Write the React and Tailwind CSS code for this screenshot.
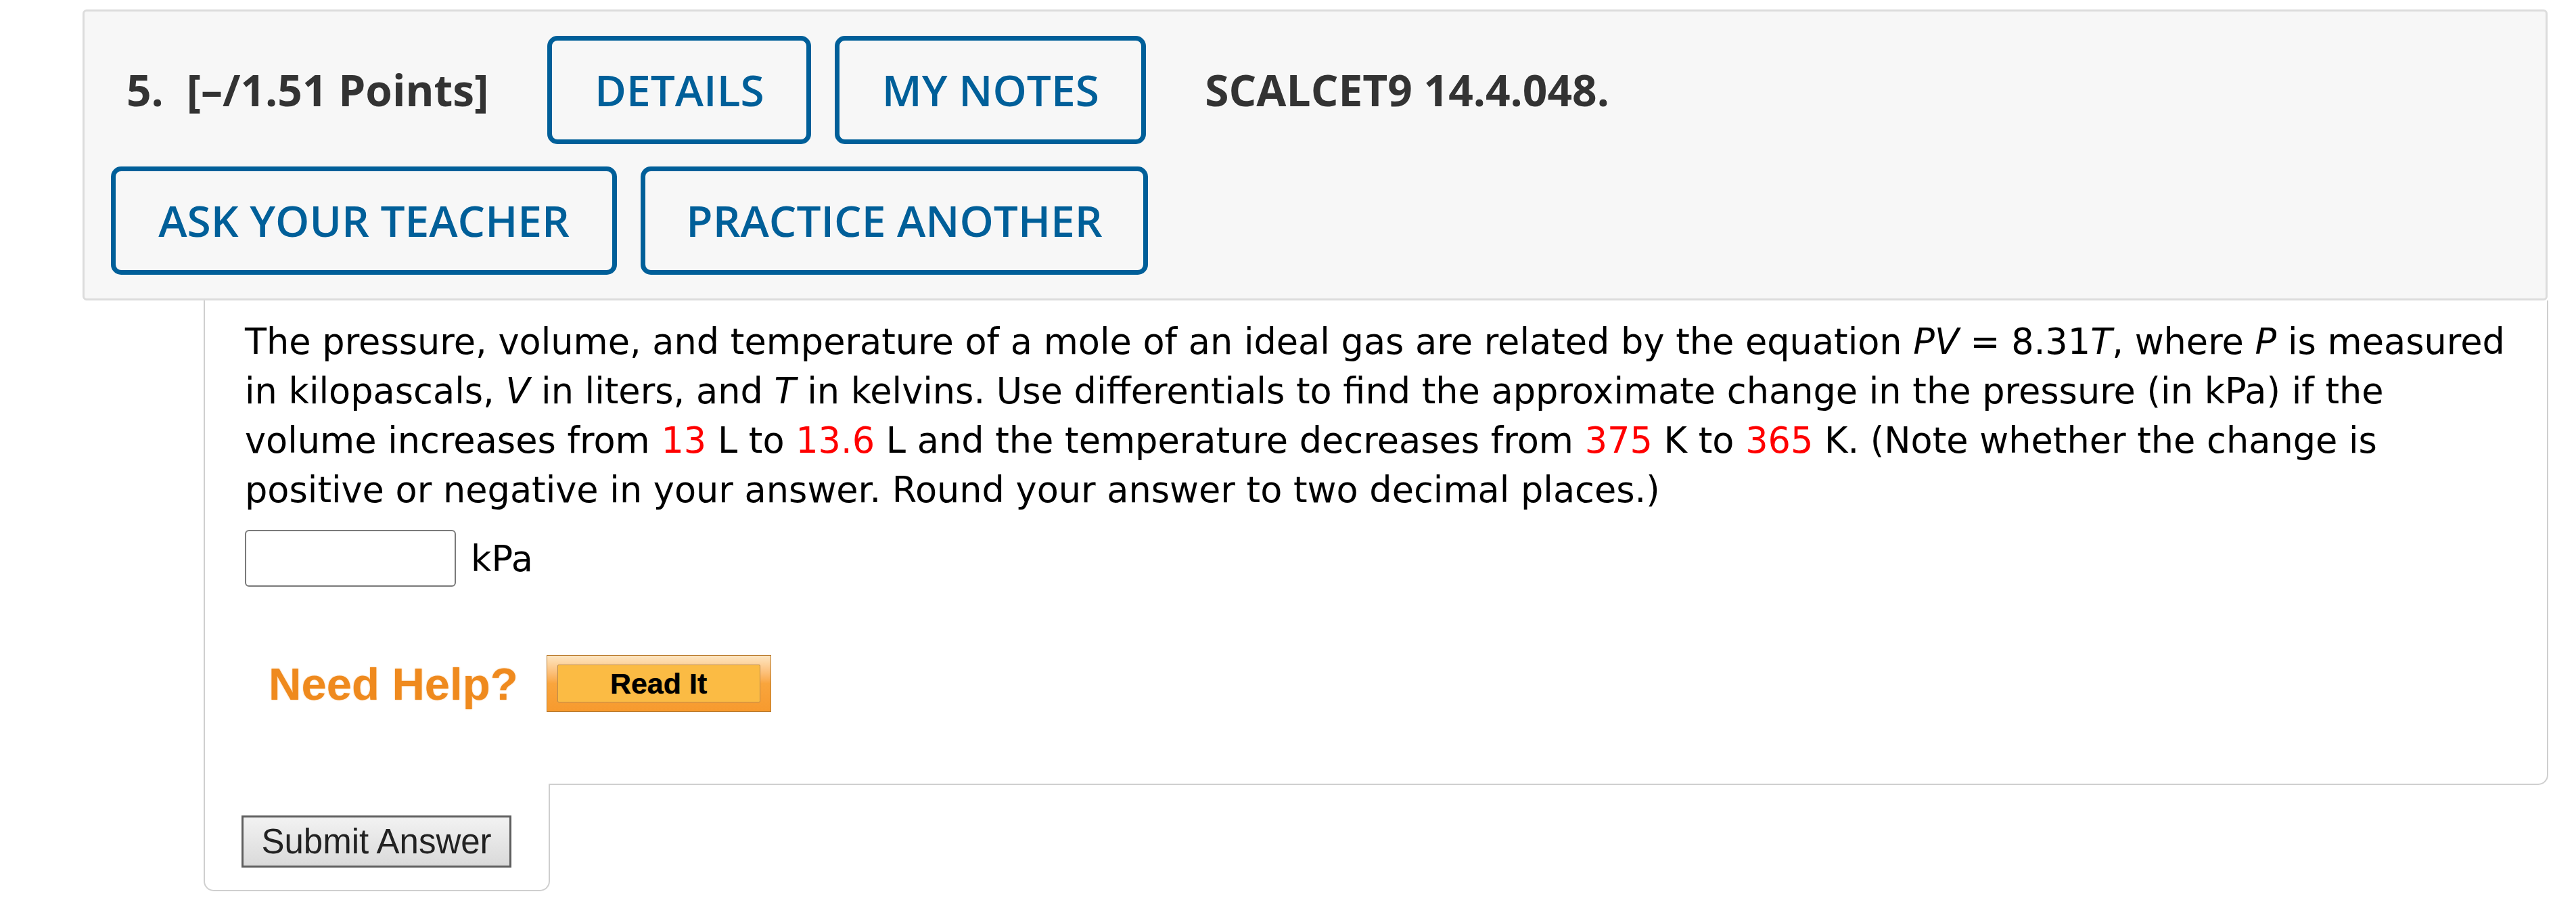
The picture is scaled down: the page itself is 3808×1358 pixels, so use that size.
import React from 'react'

const openSans = { fontFamily: '"Open Sans", "Liberation Sans", sans-serif' }

const OutlineButton = ({ label, width }) => (
  <button
    className={`${width} h-[160px] shrink-0 rounded-[15px] border-[7px] border-[#005f99] bg-[#f7f7f7] text-[64px] font-semibold leading-none text-[#005f99]`}
  >
    {label}
  </button>
)

const Red = ({ children }) => <span className="text-[#ff0000]">{children}</span>

const App = () => {
  return (
    <div className="h-[1358px] w-[3808px] overflow-hidden bg-white pt-[14px]">
      {/* question header */}
      <div
        style={openSans}
        className="ml-[122px] w-[3644px] rounded-[6px] border-[3px] border-[#dcdcdc] bg-[#f7f7f7] pb-[35px] pl-[39px] pt-[36px]"
      >
        <div className="flex items-center">
          <p className="ml-[23px] text-[64px] font-bold leading-none text-[#333]">
            5.<span className="ml-[34px]">[–/1.51 Points]</span>
          </p>
          <div className="ml-[87px] flex gap-[35px]">
            <OutlineButton label="DETAILS" width="w-[390px]" />
            <OutlineButton label="MY NOTES" width="w-[460px]" />
          </div>
          <p className="ml-[87px] text-[64px] font-bold leading-none text-[#333]">SCALCET9 14.4.048.</p>
        </div>
        <div className="mt-[33px] flex gap-[35px]">
          <OutlineButton label="ASK YOUR TEACHER" width="w-[748px]" />
          <OutlineButton label="PRACTICE ANOTHER" width="w-[750px]" />
        </div>
      </div>

      {/* question body */}
      <div className="ml-[301px] w-[3466px] rounded-br-[15px] border-x-2 border-b-2 border-[#cfcfcf] bg-white pb-[106px] pl-[59px] pt-[24px]">
        <p className="whitespace-nowrap font-['DejaVu_Sans',Verdana,sans-serif] text-[52.5px] leading-[73px] text-black">
          The pressure, volume, and temperature of a mole of an ideal gas are related by the equation <i>PV</i> = 8.31<i>T</i>, where <i>P</i> is measured
          <br />
          in kilopascals, <i>V</i> in liters, and <i>T</i> in kelvins. Use differentials to find the approximate change in the pressure (in kPa) if the
          <br />
          volume increases from <Red>13</Red> L to <Red>13.6</Red> L and the temperature decreases from <Red>375</Red> K to <Red>365</Red> K. (Note whether the change is
          <br />
          positive or negative in your answer. Round your answer to two decimal places.)
        </p>

        <div className="mt-[23px] flex items-center">
          <input type="text" className="h-[84px] w-[312px] rounded-[6px] border-2 border-[#7a7a7a] bg-white" />
          <span className="ml-[22px] font-['DejaVu_Sans',Verdana,sans-serif] text-[52.5px] leading-[73px] text-black">kPa</span>
        </div>

        <div className="ml-[35px] mt-[101px] flex items-center gap-[42px]">
          <span className="font-['Liberation_Sans',Arial,sans-serif] text-[67px] font-bold leading-none text-[#ef8a1e] [text-shadow:0_0_2px_rgba(239,138,30,0.6)]">
            Need Help?
          </span>
          <div className="h-[84px] w-[332px] border border-[#b8792c] bg-linear-to-b from-[#fde6c2] via-[#f9a53c] to-[#f79a2e] px-[15px] py-[13px]">
            <div className="flex h-full items-center justify-center rounded-[2px] border border-[#b98b4c] bg-[#fbbb44]">
              <span className="font-['Liberation_Sans',Arial,sans-serif] text-[43px] font-bold leading-none text-black [text-shadow:0_0_1px_rgba(0,0,0,0.7)]">
                Read It
              </span>
            </div>
          </div>
        </div>
      </div>

      {/* submit tab */}
      <div className="-mt-[2px] ml-[301px] w-[512px] rounded-b-[15px] border-x-2 border-b-2 border-[#cfcfcf] bg-white pb-[33px] pl-[54px] pt-[47px]">
        <button className="h-[77px] w-[399px] border-[3px] border-[#5e5e5e] bg-linear-to-b from-[#f2f2f2] to-[#dadada] font-['Liberation_Sans',Arial,sans-serif] text-[51px] leading-none text-[#222]">
          Submit Answer
        </button>
      </div>
    </div>
  )
}

export default App
